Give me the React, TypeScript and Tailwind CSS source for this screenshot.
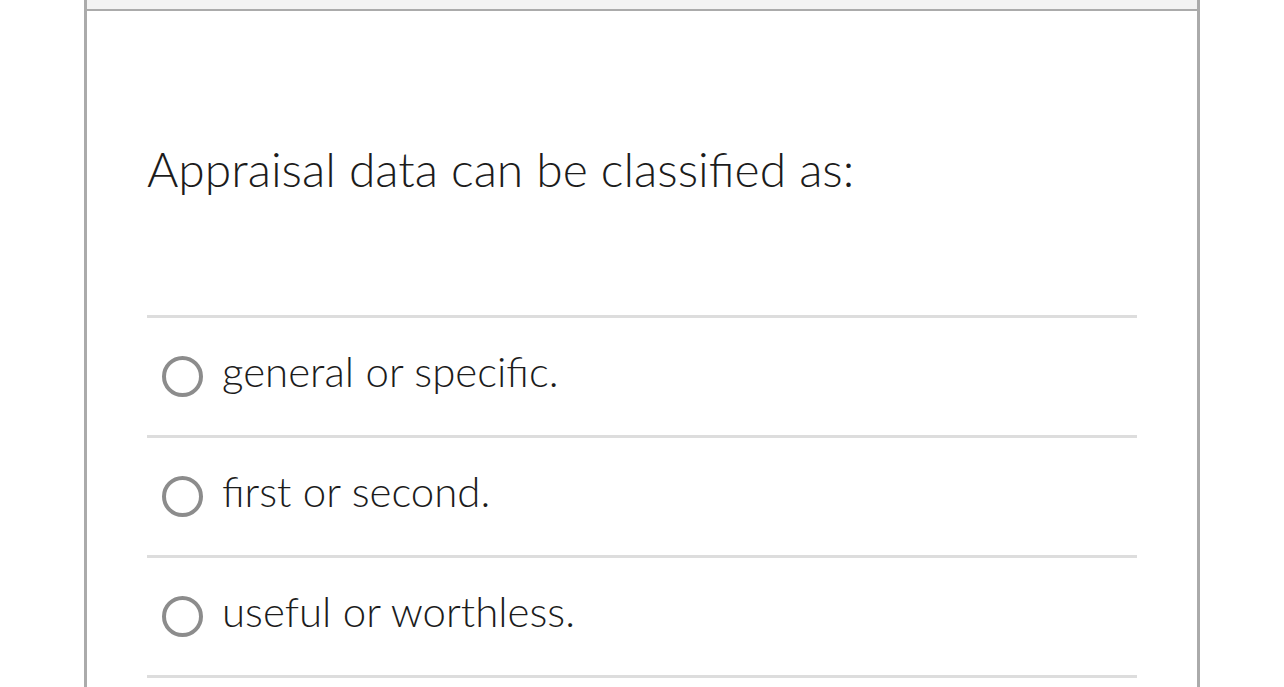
const options = ["general or specific.", "first or second.", "useful or worthless."]

export default function App() {
  return (
    <div className="min-h-screen bg-white font-['Lato','Liberation_Sans',sans-serif] text-[#1c1c1c]">
      <div className="ml-[84px] w-[1116px] border-x-[3px] border-[#ababab] min-h-[687px]">
        {/* strip from the previous block */}
        <div className="h-[9px] bg-[#f3f3f3] border-b-[2px] border-[#ababab] box-content" />

        <div className="px-[60px]">
          <div className="pt-[130px] pb-[118px]">
            <p className="text-[48px] leading-[56px] font-light">Appraisal data can be classified as:</p>
          </div>

          <div className="border-t-[3px] border-[#dddddd]">
            {options.map((opt) => (
              <label
                key={opt}
                className="flex items-center h-[120px] border-b-[3px] border-[#dddddd] box-border cursor-pointer"
              >
                <span className="ml-[15px] w-[41px] h-[41px] rounded-full border-[4px] border-[#8c8c8c] shrink-0" />
                <span className="ml-[19px] -mt-[12px] text-[42px] leading-[48px] font-light">{opt}</span>
              </label>
            ))}
          </div>
        </div>
      </div>
    </div>
  )
}
